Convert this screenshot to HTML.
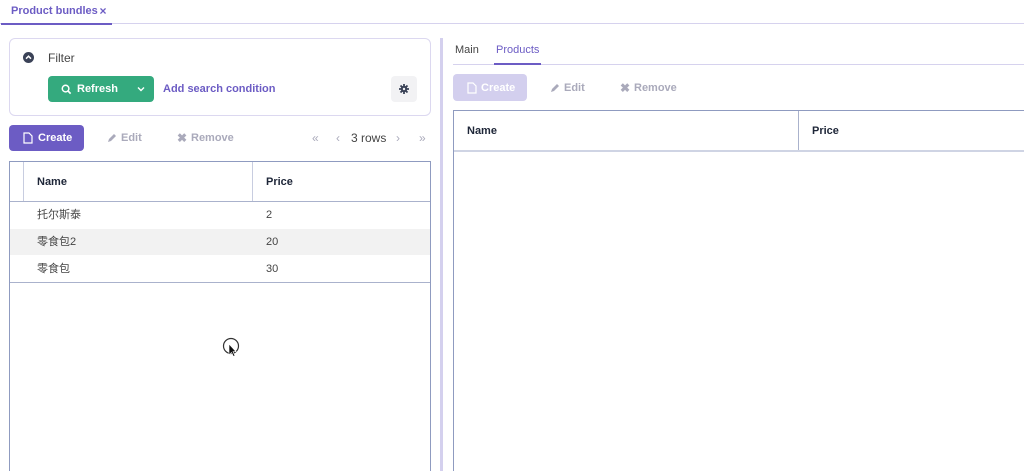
<!DOCTYPE html>
<html style="width:1024px;height:471px;overflow:hidden"><head><meta charset="utf-8"><style>
*{box-sizing:border-box;margin:0;padding:0}
body{width:1024px;height:471px;overflow:hidden;background:#fff;font-family:"Liberation Sans","Noto Sans CJK SC",sans-serif;font-size:12px;color:#333;position:relative}
.abs{position:absolute}
.b{font-weight:bold}
.c{line-height:14px;height:14px}
</style></head><body>
<div class="abs" style="left:0;top:23px;width:1024px;height:1px;background:#d6d2ee"></div>
<div class="abs" style="left:1px;top:0;width:111px;height:25px;border-bottom:2px solid #6c5cc4"></div>
<div class="abs b" style="left:11px;top:5px;color:#6c5cc4;font-size:11px">Product bundles</div>
<div class="abs b" style="left:98px;top:4px;color:#6c5cc4;font-size:12px;width:10px;text-align:center">×</div>

<div class="abs" style="left:9px;top:38px;width:422px;height:78px;border:1px solid #dcd8f0;border-radius:6px"></div>
<svg class="abs" style="left:23px;top:52px" width="11" height="11" viewBox="0 0 12 12"><circle cx="6" cy="6" r="6" fill="#3a4257"/><path d="M3.3 7.3L6 4.6l2.7 2.7" stroke="#fff" stroke-width="1.6" fill="none"/></svg>
<div class="abs" style="left:48px;top:51px;font-size:12px;color:#444">Filter</div>
<div class="abs" style="left:48px;top:76px;width:106px;height:26px;background:#34aa7e;border-radius:4px"></div>
<svg class="abs" style="left:61px;top:84px" width="11" height="11" viewBox="0 0 12 12"><circle cx="5" cy="5" r="3.6" stroke="#fff" stroke-width="1.6" fill="none"/><path d="M7.6 7.6L10.5 10.5" stroke="#fff" stroke-width="1.8"/></svg>
<div class="abs b" style="left:77px;top:83px;color:#fff;font-size:11px">Refresh</div>
<svg class="abs" style="left:137px;top:86px" width="8" height="6" viewBox="0 0 8 6"><path d="M1 1.5l3 3 3-3" stroke="#fff" stroke-width="1.4" fill="none"/></svg>
<div class="abs b" style="left:163px;top:83px;color:#6c5cc4;font-size:11px">Add search condition</div>
<div class="abs" style="left:391px;top:76px;width:26px;height:26px;background:#f2f2f4;border-radius:4px"></div>
<svg class="abs" style="left:399px;top:84px" width="10" height="10" viewBox="0 0 10 10"><circle cx="5" cy="5" r="3.2" fill="#3a4257"/><g stroke="#3a4257" stroke-width="1.8"><path d="M5 0v10M0 5h10M1.5 1.5l7 7M8.5 1.5l-7 7"/></g><circle cx="5" cy="5" r="1.2" fill="#f2f2f4"/></svg>

<div class="abs" style="left:9px;top:125px;width:75px;height:26px;background:#6c5cc4;border-radius:4px"></div>
<svg class="abs" style="left:23px;top:132px" width="10" height="12" viewBox="0 0 10 12"><path d="M1 1h5l3 3v7H1z" stroke="#fff" stroke-width="1.2" fill="none"/></svg>
<div class="abs b" style="left:38px;top:132px;color:#fff;font-size:11px">Create</div>
<svg class="abs" style="left:107px;top:133px" width="10" height="10" viewBox="0 0 10 10"><path d="M1 9l1-3 5-5 2 2-5 5z" fill="#aab"/></svg>
<div class="abs b" style="left:121px;top:132px;color:#aab;font-size:11px">Edit</div>
<div class="abs b" style="left:177px;top:131px;color:#aab;font-size:12px">✖</div>
<div class="abs b" style="left:191px;top:132px;color:#aab;font-size:11px">Remove</div>
<div class="abs" style="left:312px;top:131px;color:#aab;font-size:12px">«</div>
<div class="abs" style="left:336px;top:131px;color:#aab;font-size:12px">‹</div>
<div class="abs" style="left:351px;top:131px;color:#444;font-size:12px">3 rows</div>
<div class="abs" style="left:396px;top:131px;color:#aab;font-size:12px">›</div>
<div class="abs" style="left:419px;top:131px;color:#aab;font-size:12px">»</div>

<div class="abs" style="left:9px;top:161px;width:422px;height:320px;border:1px solid #8f9bc0"></div>
<div class="abs" style="left:23px;top:162px;width:1px;height:40px;background:#c8cde0"></div>
<div class="abs" style="left:252px;top:162px;width:1px;height:40px;background:#c8cde0"></div>
<div class="abs" style="left:10px;top:201px;width:420px;height:1px;background:#aab2cc"></div>
<div class="abs b c" style="left:37px;top:175px;color:#1e2638;font-size:11px">Name</div>
<div class="abs b c" style="left:266px;top:175px;color:#1e2638;font-size:11px">Price</div>
<div class="abs" style="left:10px;top:229px;width:420px;height:26px;background:#f2f2f2"></div>
<div class="abs c" style="left:37px;top:208px;font-size:11px;color:#444">托尔斯泰</div>
<div class="abs c" style="left:266px;top:208px;font-size:11px;color:#444">2</div>
<div class="abs c" style="left:37px;top:235px;font-size:11px;color:#444">零食包2</div>
<div class="abs c" style="left:266px;top:235px;font-size:11px;color:#444">20</div>
<div class="abs c" style="left:37px;top:262px;font-size:11px;color:#444">零食包</div>
<div class="abs c" style="left:266px;top:262px;font-size:11px;color:#444">30</div>
<div class="abs" style="left:10px;top:282px;width:420px;height:1px;background:#aab2cc"></div>

<svg class="abs" style="left:222px;top:337px" width="18" height="22" viewBox="0 0 18 22"><circle cx="9" cy="9" r="7.5" stroke="#333" stroke-width="1.2" fill="none"/><path d="M7 7v11l2.5-2.5 2 4 1.5-.8-2-4H14z" fill="#111" stroke="#fff" stroke-width=".6"/></svg>

<div class="abs" style="left:440px;top:38px;width:3px;height:433px;background:#d4d0ee"></div>

<div class="abs" style="left:453px;top:64px;width:571px;height:1px;background:#d6d2ee"></div>
<div class="abs" style="left:455px;top:44px;font-size:11px;color:#444">Main</div>
<div class="abs" style="left:496px;top:44px;font-size:11px;color:#6c5cc4">Products</div>
<div class="abs" style="left:494px;top:63px;width:47px;height:2px;background:#6c5cc4"></div>

<div class="abs" style="left:453px;top:74px;width:74px;height:27px;background:#d3cfee;border-radius:4px"></div>
<svg class="abs" style="left:467px;top:82px" width="10" height="12" viewBox="0 0 10 12"><path d="M1 1h5l3 3v7H1z" stroke="#fff" stroke-width="1.2" fill="none"/></svg>
<div class="abs b" style="left:481px;top:82px;color:#fff;font-size:11px">Create</div>
<svg class="abs" style="left:550px;top:83px" width="10" height="10" viewBox="0 0 10 10"><path d="M1 9l1-3 5-5 2 2-5 5z" fill="#aab"/></svg>
<div class="abs b" style="left:564px;top:82px;color:#aab;font-size:11px">Edit</div>
<div class="abs b" style="left:620px;top:81px;color:#aab;font-size:12px">✖</div>
<div class="abs b" style="left:634px;top:82px;color:#aab;font-size:11px">Remove</div>

<div class="abs" style="left:453px;top:110px;width:580px;height:370px;border:1px solid #8f9bc0"></div>
<div class="abs" style="left:798px;top:111px;width:1px;height:40px;background:#aab2cc"></div>
<div class="abs" style="left:454px;top:150px;width:570px;height:2px;background:#cfd4e4"></div>
<div class="abs b c" style="left:467px;top:124px;color:#1e2638;font-size:11px">Name</div>
<div class="abs b c" style="left:812px;top:124px;color:#1e2638;font-size:11px">Price</div>
</body></html>
